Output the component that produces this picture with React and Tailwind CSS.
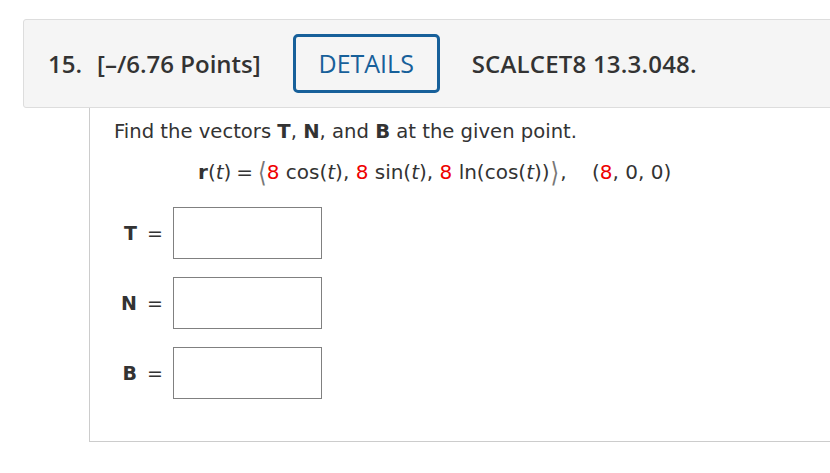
import React from "react";

const Red = ({ children }) => <span className="text-[#ee0000]">{children}</span>;
const T = () => <span className="italic">t</span>;
const Br = ({ children, cls }) => (
  <span className={"inline-block text-[#777] text-[22px] leading-[20px] scale-y-[1.25] align-[-1px] " + cls}>{children}</span>
);

function Row({ label }) {
  return (
    <div className="flex items-center h-[52px]">
      <div className="w-[47px] text-right font-bold text-[19px] text-[#333]">{label}</div>
      <div className="w-[36px] text-center text-[19px] text-[#333]">=</div>
      <div className="w-[149px] h-[52px] border border-[#808080] bg-white" />
    </div>
  );
}

export default function App() {
  return (
    <div className="w-[830px] h-[473px] bg-white overflow-hidden" style={{ fontFamily: "'DejaVu Sans', Verdana, sans-serif" }}>
      <div className="pt-[19px] pl-[23px]">
        <div
          className="w-[820px] h-[89px] bg-[#f5f5f5] border border-[#dddddd] rounded-[3px] flex items-center pl-[24px] text-[#333] font-semibold text-[24px]"
          style={{ fontFamily: "'Open Sans', sans-serif" }}
        >
          <span>15.</span>
          <span className="ml-[15px]">[–/6.76 Points]</span>
          <div className="ml-[32px] w-[147px] h-[59px] border-[3px] border-[#17609a] rounded-[5px] flex items-center justify-center text-[#17609a] font-normal text-[25px]">
            DETAILS
          </div>
          <span className="ml-[32px] tracking-[0.2px]">SCALCET8 13.3.048.</span>
        </div>
      </div>
      <div className="ml-[89px] w-[760px] h-[334px] border-l border-b border-[#cccccc] text-[#333] text-[19px]">
        <div className="pl-[24px] pt-[12px] leading-[24px] text-[19.6px]">
          Find the vectors <b>T</b>, <b>N</b>, and <b>B</b> at the given point.
        </div>
        <div className="pl-[108px] pt-[16px] leading-[24px] whitespace-pre text-[20px]">
          <b>r</b>(<T />)<span className="ml-[5px] mr-[5px]">=</span><Br cls="">⟨</Br><Red>8</Red> cos(<T />), <Red>8</Red> sin(<T />), <Red>8</Red> ln(cos(<T />))<Br cls="mx-[1px]">⟩</Br>,    (<Red>8</Red>, 0, 0)
        </div>
        <div className="pt-[23px] flex flex-col gap-[18px]">
          <Row label="T" />
          <Row label="N" />
          <Row label="B" />
        </div>
      </div>
    </div>
  );
}
